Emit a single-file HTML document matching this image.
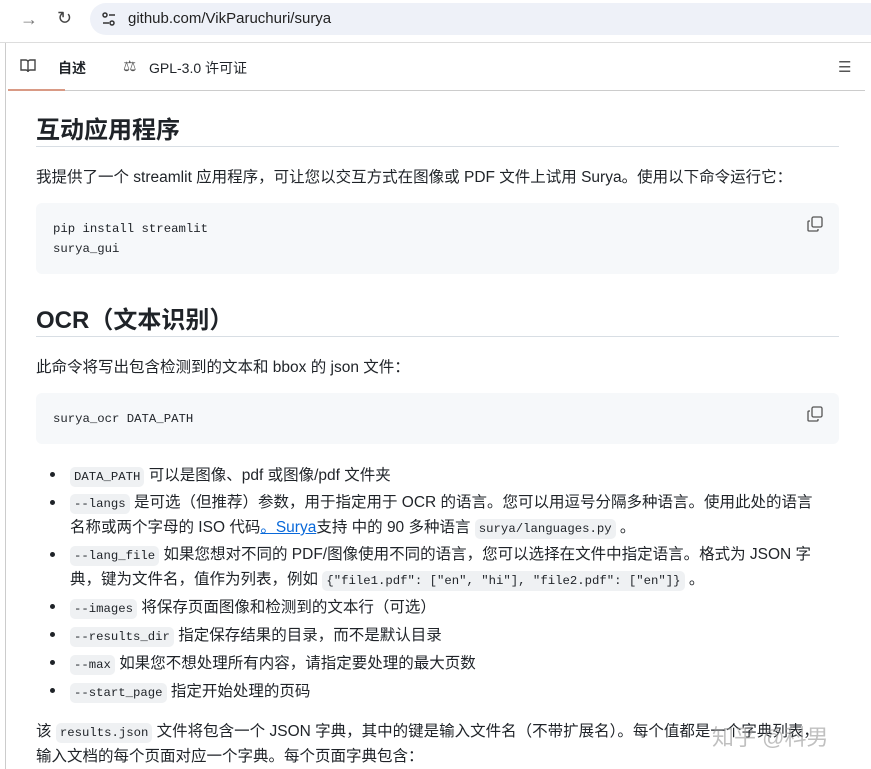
<!DOCTYPE html>
<html><head><meta charset="utf-8"><style>
body{margin:0;width:871px;height:769px;overflow:hidden;background:#fff;font-family:"Liberation Sans","Noto Sans CJK SC",sans-serif;color:#1f2328;position:relative}
.a{position:absolute}
.code{background:#f6f8fa;border-radius:6px}
.mono{font-family:"Liberation Mono","Noto Sans CJK SC",monospace}
code{font-family:"Liberation Mono",monospace;font-size:12.3px;background:#eff1f3;border-radius:5px;padding:3px 4px}
li{position:absolute;left:70px;font-size:15.5px;white-space:nowrap}
li:before{content:"";position:absolute;left:-20px;top:9px;width:5px;height:5px;border-radius:50%;background:#1f2328}
h2{position:absolute;left:36px;margin:0;font-size:24px;font-weight:bold}
.hr{position:absolute;left:36px;width:803px;height:1px;background:#d8dee4}
p{position:absolute;left:36px;margin:0;font-size:15.5px;white-space:nowrap}
</style></head><body>
<div class="a" style="left:0;top:0;width:871px;height:42px;background:#fff"></div>
<div class="a" style="left:20px;top:9px;font-size:18px;color:#777">→</div>
<div class="a" style="left:57px;top:8px;font-size:18px;color:#444">↻</div>
<div class="a" style="left:90px;top:3px;width:800px;height:32px;border-radius:16px;background:#eef1f8"></div>
<svg class="a" style="left:101px;top:11px" width="16" height="16" viewBox="0 0 16 16" fill="none" stroke="#333" stroke-width="1.5"><circle cx="4" cy="4" r="2"/><line x1="8" y1="4" x2="14" y2="4"/><circle cx="11" cy="12" r="2"/><line x1="2" y1="12" x2="8" y2="12"/></svg>
<div class="a" style="left:128px;top:10px;font-size:15px;color:#222">github.com/VikParuchuri/surya</div>
<div class="a" style="left:0;top:42px;width:871px;height:1px;background:#ddd"></div>
<div class="a" style="left:5px;top:43px;width:1px;height:726px;background:#ccc"></div>
<svg class="a" style="left:20px;top:59px" width="16" height="14" viewBox="0 0 16 14" fill="none" stroke="#444" stroke-width="1.4"><path d="M1 1h5c1 0 2 1 2 2v10c0-1-1-2-2-2H1zM15 1h-5c-1 0-2 1-2 2v10c0-1 1-2 2-2h5z"/></svg>
<div class="a" style="left:58px;top:58px;font-size:14px;font-weight:bold">自述</div>
<div class="a" style="left:123px;top:57px;font-size:15px;color:#555">⚖</div>
<div class="a" style="left:149px;top:58px;font-size:14px">GPL-3.0 许可证</div>
<div class="a" style="left:838px;top:58px;font-size:15px;color:#555">☰</div>
<div class="a" style="left:8px;top:90px;width:857px;height:1px;background:#ccc"></div>
<div class="a" style="left:8px;top:89px;width:57px;height:2px;background:#d99a85"></div>

<h2 style="top:110px">互动应用程序</h2>
<div class="hr" style="top:146px"></div>
<p style="top:165px">我提供了一个 streamlit 应用程序，可让您以交互方式在图像或 PDF 文件上试用 Surya。使用以下命令运行它：</p>
<div class="a code" style="left:36px;top:203px;width:803px;height:71px"></div>
<div class="a mono" style="left:53px;top:219px;font-size:12.3px;line-height:20px">pip install streamlit<br>surya_gui</div>
<svg class="a" style="left:807px;top:216px" width="16" height="16" viewBox="0 0 16 16" fill="none" stroke="#555" stroke-width="1.3"><rect x="5" y="1" width="10" height="10" rx="1.5"/><path d="M3 5H2a1 1 0 0 0-1 1v8a1 1 0 0 0 1 1h8a1 1 0 0 0 1-1v-1"/></svg>

<h2 style="top:300px">OCR（文本识别）</h2>
<div class="hr" style="top:336px"></div>
<p style="top:355px">此命令将写出包含检测到的文本和 bbox 的 json 文件：</p>
<div class="a code" style="left:36px;top:393px;width:803px;height:51px"></div>
<div class="a mono" style="left:53px;top:409px;font-size:12.3px;line-height:20px">surya_ocr DATA_PATH</div>
<svg class="a" style="left:807px;top:406px" width="16" height="16" viewBox="0 0 16 16" fill="none" stroke="#555" stroke-width="1.3"><rect x="5" y="1" width="10" height="10" rx="1.5"/><path d="M3 5H2a1 1 0 0 0-1 1v8a1 1 0 0 0 1 1h8a1 1 0 0 0 1-1v-1"/></svg>

<ul style="margin:0;padding:0;list-style:none">
<li style="top:463px"><code>DATA_PATH</code> 可以是图像、pdf 或图像/pdf 文件夹</li>
<li style="top:491px;line-height:24px"><code>--langs</code> 是可选（但推荐）参数，用于指定用于 OCR 的语言。您可以用逗号分隔多种语言。使用此处的语言<br>名称或两个字母的 ISO 代码<span style="color:#0969da;text-decoration:underline">。Surya</span>支持 中的 90 多种语言 <code>surya/languages.py</code> 。</li>
<li style="top:543px;line-height:24px"><code>--lang_file</code> 如果您想对不同的 PDF/图像使用不同的语言，您可以选择在文件中指定语言。格式为 JSON 字<br>典，键为文件名，值作为列表，例如 <code>{"file1.pdf": ["en", "hi"], "file2.pdf": ["en"]}</code> 。</li>
<li style="top:595px"><code>--images</code> 将保存页面图像和检测到的文本行（可选）</li>
<li style="top:623px"><code>--results_dir</code> 指定保存结果的目录，而不是默认目录</li>
<li style="top:651px"><code>--max</code> 如果您不想处理所有内容，请指定要处理的最大页数</li>
<li style="top:679px"><code>--start_page</code> 指定开始处理的页码</li>
</ul>
<p style="top:720px;line-height:24px">该 <code>results.json</code> 文件将包含一个 JSON 字典，其中的键是输入文件名（不带扩展名）。每个值都是一个字典列表，<br>输入文档的每个页面对应一个字典。每个页面字典包含：</p>
<div class="a" style="left:712px;top:720px;font-size:22px;color:rgba(150,150,150,.6)">知乎 @科男</div>
</body></html>
